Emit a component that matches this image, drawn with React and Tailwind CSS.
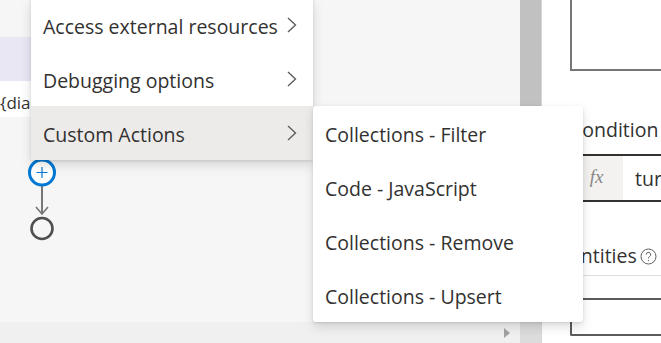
import React from "react";

const font = { fontFamily: '"Open Sans", "Noto Sans", sans-serif' };

function Chevron() {
  return (
    <svg width="12" height="20" viewBox="0 0 12 20" className="shrink-0 text-[#605e5c]">
      <path d="M2 3 L9.5 10 L2 17" fill="none" stroke="currentColor" strokeWidth="1.4" />
    </svg>
  );
}

function MenuItem({ label, active, sub }) {
  return (
    <div
      className={`flex h-[54px] items-center justify-between pl-[12px] pr-[15px] text-[19.5px] text-[#323130] ${
        active ? "bg-[#edebe9]" : ""
      }`}
    >
      <span className="whitespace-nowrap pt-[3px]">{label}</span>
      {sub && <Chevron />}
    </div>
  );
}

export default function App() {
  const mainItems = [
    { label: "Access external resources" },
    { label: "Debugging options" },
    { label: "Custom Actions", active: true },
  ];
  const subItems = [
    "Collections - Filter",
    "Code - JavaScript",
    "Collections - Remove",
    "Collections - Upsert",
  ];

  return (
    <div className="relative flex h-[343px] w-[661px] overflow-hidden bg-white" style={font}>
      {/* authoring canvas */}
      <div className="flex w-[541px] shrink-0 flex-col">
        <div className="flex flex-1">
          <div className="relative flex-1 overflow-hidden bg-[#f6f6f6]">
            {/* node card */}
            <div className="absolute left-[-40px] top-[37px] w-[280px]">
              <div className="h-[44px] bg-[#e9e7f4]" />
              <div className="flex h-[36px] items-center whitespace-nowrap bg-white pl-[40px] pt-[8px] text-[17px] text-[#323130]">
                {"{dialog.result}"}
              </div>
            </div>
            {/* add button and end node */}
            <svg className="absolute left-[26px] top-[157px]" width="32" height="86" viewBox="0 0 32 86">
              <line x1="16" y1="29" x2="16" y2="57" stroke="#797775" strokeWidth="2" />
              <path d="M10 50 L16 57 L22 50" fill="none" stroke="#797775" strokeWidth="1.6" />
              <circle cx="16" cy="15.5" r="12.5" fill="white" stroke="#0078d4" strokeWidth="3" />
              <path d="M16 10 V21 M10.5 15.5 H21.5" stroke="#0078d4" strokeWidth="1.2" />
              <circle cx="16" cy="71.5" r="10.5" fill="none" stroke="#4f4f4f" strokeWidth="2.6" />
            </svg>
          </div>
          {/* vertical scrollbar */}
          <div className="flex w-[21px] flex-col bg-[#f0f0f0]">
            <div className="h-[108px] bg-[#c1c1c1]" />
          </div>
        </div>
        {/* horizontal scrollbar */}
        <div className="flex h-[21px]">
          <div className="flex flex-1 items-center justify-end bg-[#f0f0f0] pr-[10px]">
            <svg width="6" height="10" viewBox="0 0 6 10">
              <path d="M0 0 L6 5 L0 10 Z" fill="#a3a3a3" />
            </svg>
          </div>
          <div className="w-[21px] bg-[#dcdcdc]" />
        </div>
      </div>

      {/* property panel */}
      <div className="min-w-0 flex-1 overflow-hidden whitespace-nowrap border-l border-[#d6d6d6] pl-[28px] text-[19.5px] text-[#323130]">
        <div className="-mt-[4px] h-[75px] border-2 border-r-0 border-[#767676]" />
        <div className="mt-[45px] leading-[28px]">Condition</div>
        <div className="mt-[10px] flex h-[48px] border-y-2 border-y-[#323130]">
          <div
            className="flex w-[53px] shrink-0 items-center justify-center bg-[#f3f2f1] pb-[2px] text-[19px] italic text-[#8a8886]"
            style={{ fontFamily: '"Liberation Serif", serif' }}
          >
            fx
          </div>
          <div className="flex items-center pl-[12px] pt-[2px]">turn.recognized.entities</div>
        </div>
        <div className="mt-[40px] flex items-center leading-[28px]">
          <span>Entities</span>
          <svg className="ml-[3px] shrink-0" width="17" height="17" viewBox="0 0 17 17">
            <circle cx="8.5" cy="8.5" r="7.5" fill="none" stroke="#605e5c" strokeWidth="1" />
            <path d="M6.3 6.6 A2.2 2.2 0 1 1 9.5 8.5 C8.7 9 8.5 9.5 8.5 10.5" fill="none" stroke="#605e5c" strokeWidth="1" />
            <circle cx="8.5" cy="12.6" r="0.7" fill="#605e5c" />
          </svg>
        </div>
        <div className="mt-[5px] h-px bg-[#e1dfdd]" />
        <div className="mt-[22px] h-[38px] rounded-l-[2px] border-2 border-r-0 border-[#5c5c5c]" />
      </div>

      {/* context menu */}
      <div className="absolute left-[31px] top-[-2px] w-[282px] bg-white shadow-[0_5px_11px_rgba(0,0,0,0.13),0_1px_3px_rgba(0,0,0,0.11)]">
        {mainItems.map((it) => (
          <MenuItem key={it.label} label={it.label} active={it.active} sub />
        ))}
      </div>

      {/* submenu */}
      <div className="absolute left-[313px] top-[106px] w-[270px] rounded-[3px] bg-white shadow-[0_5px_11px_rgba(0,0,0,0.13),0_1px_3px_rgba(0,0,0,0.11)]">
        {subItems.map((s) => (
          <MenuItem key={s} label={s} />
        ))}
      </div>
    </div>
  );
}
